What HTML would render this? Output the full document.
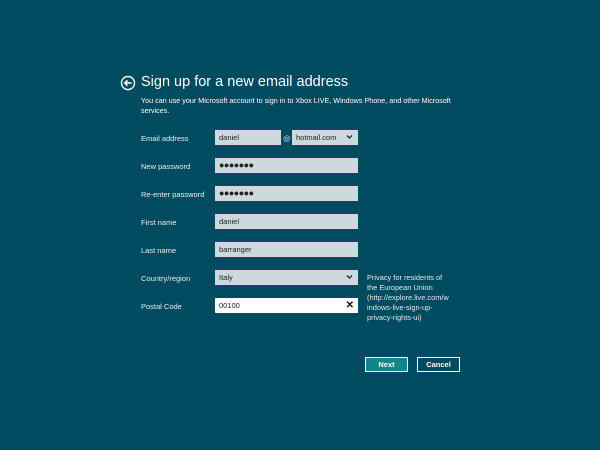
<!DOCTYPE html>
<html><head><style>
body{margin:0;width:600px;height:450px;background:#004b5f;font-family:"Liberation Sans",sans-serif;color:#fff;position:relative;overflow:hidden}
.a{position:absolute}
.lbl{position:absolute;left:141px;font-size:7.5px;color:#e8f0f2}
.f{position:absolute;background:#ccdade;height:15px;color:#222;font-size:7.5px;line-height:15px;padding-left:4px;box-sizing:border-box}
.dots{letter-spacing:-0.5px;font-size:9px;font-weight:bold}
.chev{position:absolute;right:5px;top:4px}
</style></head><body>
<svg class="a" style="left:120px;top:75px" width="16" height="16" viewBox="0 0 16 16"><circle cx="8" cy="8" r="6.5" fill="none" stroke="#fff" stroke-width="1.4"/><path d="M11.5 8H5M7.5 5.3L4.8 8l2.7 2.7" fill="none" stroke="#fff" stroke-width="1.5"/></svg>
<div class="a" style="left:141px;top:74px;font-size:14.5px">Sign up for a new email address</div>
<div class="a" style="left:141px;top:96px;font-size:7.2px;line-height:10px;width:320px">You can use your Microsoft account to sign in to Xbox LIVE, Windows Phone, and other Microsoft<br>services.</div>
<div class="lbl" style="top:134px">Email address</div>
<div class="f" style="left:215px;top:130px;width:66px">daniel</div>
<div class="a" style="left:283px;top:134px;font-size:7.5px;color:#cde">@</div>
<div class="f" style="left:292px;top:130px;width:66px">hotmail.com<svg class="chev" width="7" height="6" viewBox="0 0 7 6"><path d="M1 1.5l2.5 2.5L6 1.5" fill="none" stroke="#333" stroke-width="1.4"/></svg></div>
<div class="lbl" style="top:162px">New password</div>
<div class="f dots" style="left:215px;top:158px;width:143px">●●●●●●●</div>
<div class="lbl" style="top:190px">Re-enter password</div>
<div class="f dots" style="left:215px;top:186px;width:143px">●●●●●●●</div>
<div class="lbl" style="top:218px">First name</div>
<div class="f" style="left:215px;top:214px;width:143px">daniel</div>
<div class="lbl" style="top:246px">Last name</div>
<div class="f" style="left:215px;top:242px;width:143px">barranger</div>
<div class="lbl" style="top:274px">Country/region</div>
<div class="f" style="left:215px;top:270px;width:143px">Italy<svg class="chev" width="7" height="6" viewBox="0 0 7 6"><path d="M1 1.5l2.5 2.5L6 1.5" fill="none" stroke="#333" stroke-width="1.4"/></svg></div>
<div class="lbl" style="top:302px">Postal Code</div>
<div class="f" style="left:215px;top:298px;width:143px;background:#fff">00100<span class="a" style="right:4px;top:0;font-size:10px;font-weight:bold;color:#111">✕</span></div>
<div class="a" style="left:367px;top:273px;font-size:7.4px;line-height:10px;white-space:nowrap;color:#e0eaee">Privacy for residents of<br>the European Union<br>(http://explore.live.com/w<br>indows-live-sign-up-<br>privacy-rights-ui)</div>
<div class="a" style="left:365px;top:357px;width:43px;height:15px;background:#138585;border:1px solid #fff;box-sizing:border-box;font-size:7.5px;font-weight:bold;text-align:center;line-height:13px">Next</div>
<div class="a" style="left:417px;top:357px;width:43px;height:15px;border:1px solid #fff;box-sizing:border-box;font-size:7.5px;font-weight:bold;text-align:center;line-height:13px">Cancel</div>
</body></html>
